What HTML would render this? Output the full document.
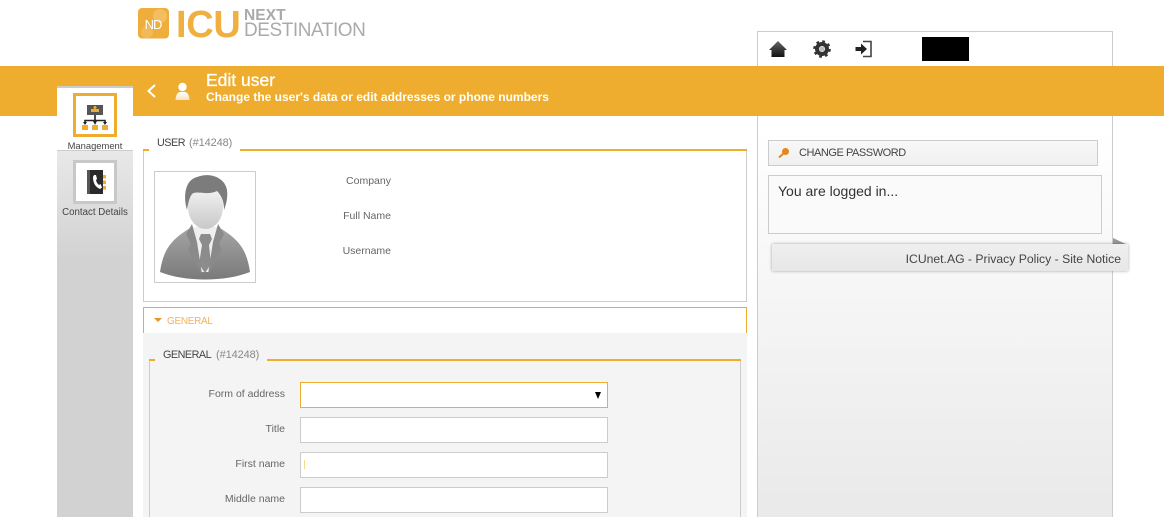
<!DOCTYPE html>
<html><head><meta charset="utf-8"><style>
html,body{margin:0;padding:0;width:1164px;height:517px;overflow:hidden;background:#fff}
body{position:relative;font-family:"Liberation Sans",sans-serif;font-size:11px;color:#555}
.a{position:absolute;box-sizing:border-box;white-space:nowrap}
.lbl{right:773px;text-align:right;color:#666;font-size:10.5px}
.inp{left:300px;width:308px;height:26px;background:#fff;border:1px solid #ccc}
.h{font-size:10.800px;line-height:15px;color:#444;letter-spacing:-.5px}
.n{font-size:11px;line-height:15px;color:#888;letter-spacing:-.1px}
</style></head><body>
<!-- logo -->
<svg class="a" style="left:138px;top:8px" width="32" height="31"><rect width="31" height="30.500" rx="4" fill="#EFAE3C"/><circle cx="22" cy="8" r="7" fill="#F6CD85" opacity=".5"/><circle cx="9" cy="24" r="6" fill="#F6CD85" opacity=".4"/><text x="15" y="21" text-anchor="middle" font-family="Liberation Sans" font-size="13" letter-spacing="-1" fill="#fff">ND</text></svg>
<div class="a" style="left:176px;top:0;font-size:38px;line-height:50px;color:#EFB040;font-weight:bold;letter-spacing:-.3px">ICU</div>
<div class="a" style="left:244px;top:7px;font-size:15.500px;line-height:17px;color:#aaa;font-weight:bold;letter-spacing:.1px">NEXT</div>
<div class="a" style="left:244px;top:20px;font-size:19px;line-height:22px;color:#aaa;letter-spacing:-.45px">DESTINATION</div>

<!-- right panel -->
<div class="a" style="left:757px;top:31px;width:356px;height:490px;border:1px solid #ccc;background:linear-gradient(#fff 20%,#e9e9e9)"></div>
<svg class="a" style="left:769px;top:40px" width="18" height="18"><defs><linearGradient id="h" x1="0" y1="0" x2="0" y2="1"><stop offset="0" stop-color="#666"/><stop offset="1" stop-color="#111"/></linearGradient></defs><path d="M9 1 L18 10 L15.500 10 L15.500 17 L2.500 17 L2.500 10 L0 10Z" fill="url(#h)"/></svg>
<svg class="a" style="left:813px;top:40px" width="18" height="18"><circle cx="9" cy="9" r="5" fill="none" stroke="#333" stroke-width="4"/><circle cx="9" cy="9" r="7.500" fill="none" stroke="#333" stroke-width="2.600" stroke-dasharray="2.700 3.190"/><circle cx="9" cy="9" r="2.400" fill="#bbb"/></svg>
<svg class="a" style="left:855px;top:40px" width="18" height="18"><path d="M8 1.500H16V16.500H8" fill="none" stroke="#444" stroke-width="1.600"/><path d="M0.500 7H6V3.500L12 9 6 14.500V11H0.500Z" fill="#222"/></svg>
<div class="a" style="left:922px;top:37px;width:47px;height:24px;background:#000"></div>

<!-- orange band -->
<div class="a" style="left:0;top:66px;width:1164px;height:50px;background:#EEAD2E"></div>
<svg class="a" style="left:146px;top:83px" width="12" height="16"><path d="M9 2 L2.500 8 L9 14" fill="none" stroke="#fff" stroke-width="2"/></svg>
<svg class="a" style="left:174px;top:81px" width="17" height="20"><defs><linearGradient id="b" x1="0" y1="0" x2="0" y2="1"><stop offset="0" stop-color="#fff"/><stop offset="1" stop-color="#f8e4bd"/></linearGradient></defs><circle cx="8.500" cy="6" r="4.200" fill="#fff"/><path d="M1.500 19 Q2 11.500 6 11H11Q15 11.500 15.500 19Z" fill="url(#b)"/></svg>
<div class="a" style="left:206px;top:71px;font-size:17.500px;line-height:19px;color:#fff;-webkit-text-stroke:.3px #fff">Edit user</div>
<div class="a" style="left:206px;top:90px;font-size:12px;line-height:15px;color:#fff;font-weight:bold">Change the user's data or edit addresses or phone numbers</div>

<!-- sidebar -->
<div class="a" style="left:57px;top:86px;width:76px;height:431px;background:linear-gradient(#e8e8e8 15%,#d2d2d2 40%);border-top:2px solid #ccc"></div>
<div class="a" style="left:57px;top:88px;width:76px;height:63px;background:#fff;border-bottom:1px solid #ccc"></div>
<div class="a" style="left:73px;top:93px;width:44px;height:44px;background:#fff;border:3px solid #EEAD2E"></div>
<svg class="a" style="left:80px;top:101px" width="30" height="30"><rect x="7" y="4" width="16" height="10" fill="#555"/><rect x="11" y="8" width="8" height="3" fill="#EEAD2E"/><circle cx="15" cy="6.500" r="1.500" fill="#EEAD2E"/><path d="M15 14V20M5 22V19.500H25V22" fill="none" stroke="#222" stroke-width="1.600"/><path d="M3 21h4l-2 3zM13 20h4l-2 4zM23 21h4l-2 3z" fill="#222"/><rect x="2" y="24" width="6" height="5" fill="#EEAD2E"/><rect x="12" y="24" width="6" height="5" fill="#EEAD2E"/><rect x="22" y="24" width="6" height="5" fill="#EEAD2E"/></svg>
<div class="a" style="left:57px;top:140px;width:76px;text-align:center;font-size:9.400px;line-height:12px;color:#444">Management</div>
<div class="a" style="left:73px;top:160px;width:44px;height:44px;background:#fff;border:3px solid #c8c8c8"></div>
<svg class="a" style="left:85px;top:169px" width="22" height="26"><path d="M2 1H18V25H2Z" fill="#2a2a2a"/><rect x="2" y="1" width="3" height="24" fill="#555"/><path d="M9 6 L11 6 L12 10 L11 11 Q11.500 14 14 16 L15.500 15 L17 18.500 L15 20 Q8 17 8 8Z" fill="#fff"/><rect x="18" y="6" width="3" height="3.500" fill="#EEAD2E"/><rect x="18" y="11.500" width="3" height="3.500" fill="#EEAD2E"/><rect x="18" y="17" width="3" height="3.500" fill="#EEAD2E"/></svg>
<div class="a" style="left:57px;top:207px;width:76px;text-align:center;font-size:9.700px;line-height:12px;color:#444">Contact Details</div>

<!-- USER -->
<div class="a" style="left:143px;top:149px;width:604px;height:153px;border:1px solid #ccc;border-top:0"></div>
<div class="a" style="left:143px;top:149px;width:6px;height:2px;background:#EEAD2E"></div>
<div class="a" style="left:240px;top:149px;width:507px;height:2px;background:#EEAD2E"></div>
<div class="a h" style="left:157px;top:136px">USER</div>
<div class="a n" style="left:189px;top:136px">(#14248)</div>
<div class="a" style="left:154px;top:171px;width:102px;height:112px;border:1px solid #ccc;background:#fff"></div>
<svg class="a" style="left:155px;top:172px" width="100" height="110">
<defs><linearGradient id="s" x1="0" y1="0" x2="0" y2="1"><stop offset="0" stop-color="#a5a5a5"/><stop offset="1" stop-color="#7a7a7a"/></linearGradient><linearGradient id="f" x1="0" y1="0" x2="0" y2="1"><stop offset="0" stop-color="#f6f6f6"/><stop offset="1" stop-color="#c8c8c8"/></linearGradient></defs>
<path d="M5 100 C8 80 14 68 37 55 H63 C86 68 92 80 95 100 C70 110 30 110 5 100Z" fill="url(#s)"/>
<path d="M37 55 H63 L54 100H46Z" fill="#efefef"/>
<path d="M46 62H55L57 67 54 73 56 92 50 101 44 92 47 73 44 67Z" fill="#8c8c8c"/>
<path d="M37 52 L31 62 36 72 33 77 47 102 L42 70Z M63 52 L69 62 64 72 67 77 53 102 L58 70Z" fill="#8a8a8a"/>
<ellipse cx="50.500" cy="35" rx="17.500" ry="22" fill="url(#f)"/>
<path d="M32 38 C28 24 30 8 42 5 C54 0 70 5 72 18 C73 26 71 33 69 38 C69 30 67 24 62 19 C52 24 42 18 37 22 C34 26 33 32 32 38Z" fill="#7c7c7c"/>
</svg>
<div class="a lbl" style="top:175px">Company</div>
<div class="a lbl" style="top:210px">Full Name</div>
<div class="a lbl" style="top:245px">Username</div>

<!-- GENERAL accordion -->
<div class="a" style="left:143px;top:333px;width:604px;height:184px;background:#f4f4f4"></div>
<div class="a" style="left:143px;top:307px;width:604px;height:26px;background:#fff;border:1px solid #EEAD2E;border-bottom:0"></div>
<div class="a" style="left:154px;top:318px;width:0;height:0;border:4px solid transparent;border-top:4px solid #E8961E;border-bottom:0"></div>
<div class="a" style="left:167px;top:315px;font-size:10px;line-height:13px;color:#F2B25E;letter-spacing:-.3px">GENERAL</div>

<div class="a" style="left:149px;top:360px;width:592px;height:170px;border:1px solid #ccc;border-top:0"></div>
<div class="a" style="left:149px;top:359px;width:6px;height:2px;background:#EEAD2E"></div>
<div class="a" style="left:267px;top:359px;width:474px;height:2px;background:#EEAD2E"></div>
<div class="a h" style="left:163px;top:348px">GENERAL</div>
<div class="a n" style="left:216px;top:348px">(#14248)</div>

<div class="a lbl" style="right:879px;top:388px">Form of address</div>
<div class="a lbl" style="right:879px;top:423px">Title</div>
<div class="a lbl" style="right:879px;top:458px">First name</div>
<div class="a lbl" style="right:879px;top:493px">Middle name</div>
<div class="a inp" style="top:382px;border-color:#EEAD2E"></div>
<div class="a" style="left:595px;top:392px;width:0;height:0;border:3px solid transparent;border-top:7px solid #000;border-bottom:0"></div>
<div class="a inp" style="top:417px"></div>
<div class="a inp" style="top:452px"></div>
<div class="a" style="left:304px;top:460px;width:1px;height:9px;background:#f6d98a"></div>
<div class="a inp" style="top:487px"></div>

<!-- right contents -->
<div class="a" style="left:768px;top:140px;width:330px;height:26px;border:1px solid #ccc;background:linear-gradient(#f8f8f8,#f0f0f0)"></div>
<svg class="a" style="left:777px;top:147px" width="13" height="12"><circle cx="8.500" cy="4.500" r="3.500" fill="#E8861E"/><path d="M7 6 L2 10.500" stroke="#E8861E" stroke-width="2"/></svg>
<div class="a" style="left:799px;top:146px;font-size:11px;line-height:15px;color:#444;letter-spacing:-.45px">CHANGE PASSWORD</div>
<div class="a" style="left:768px;top:175px;width:334px;height:59px;border:1px solid #ccc;background:#fafafa"></div>
<div class="a" style="left:778px;top:183px;font-size:14px;line-height:16px;color:#333">You are logged in...</div>
<div class="a" style="left:1113px;top:238px;width:0;height:0;border-top:7px solid transparent;border-left:15px solid #999"></div>
<div class="a" style="left:772px;top:244px;width:356px;height:27px;background:linear-gradient(#efefef,#e7e7e7);box-shadow:0 0 3px rgba(0,0,0,.35)"></div>
<div class="a" style="right:43px;top:252px;font-size:12.200px;line-height:15px;color:#444">ICUnet.AG - Privacy Policy - Site Notice</div>
</body></html>
